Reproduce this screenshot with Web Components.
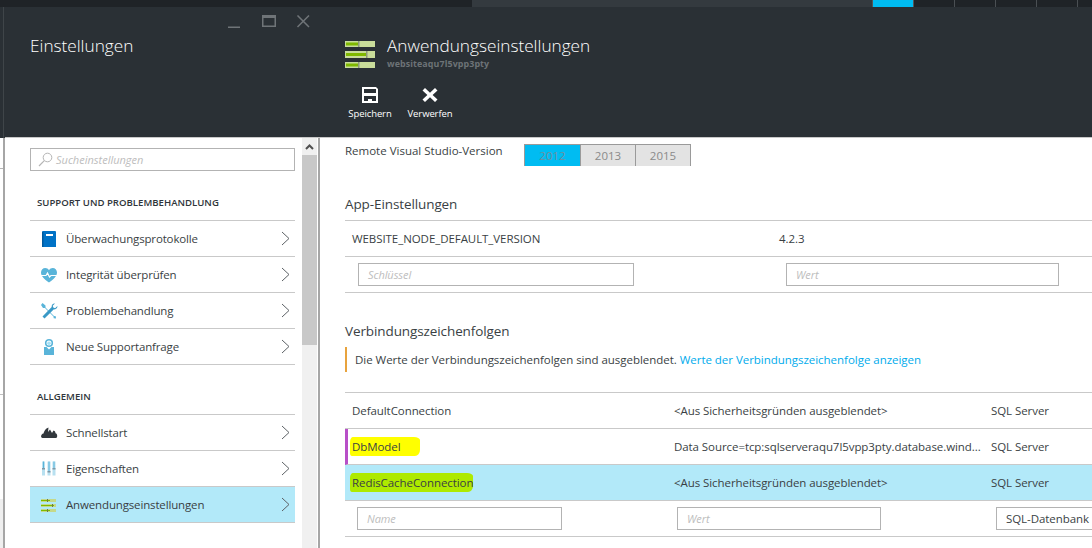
<!DOCTYPE html>
<html lang="de"><head><meta charset="utf-8"><title>Anwendungseinstellungen</title>
<style>
html,body{margin:0;padding:0;height:100%;overflow:hidden;background:#fff;}
body{width:1092px;height:548px;font-family:"Open Sans","Noto Sans",sans-serif;color:#3a3f44;display:flex;flex-direction:column;}
.shell{display:flex;flex:1;min-height:0;}
.ic{display:block;width:22px;height:18px;}
</style></head><body>
<x-topbar></x-topbar>
<div class="shell">
  <x-strip></x-strip>
  <x-blade style="width:315px" heading="Einstellungen" controls>
    <x-scroll-pane>
      <x-field style="width:265px;margin:10px 0 0" search placeholder="Sucheinstellungen"></x-field>
      <x-section style="margin-top:23px">SUPPORT UND PROBLEMBEHANDLUNG</x-section>
      <x-nav-row label="Überwachungsprotokolle"><svg slot="icon" class="ic" viewBox="0 0 22 18"><path fill="#0072c6" d="M4 2a1 1 0 0 1 1-1h12a1 1 0 0 1 1 1v15H5a1 1 0 0 1-1-1z"/><path fill="#005a9e" d="M4 2h1.500v15H4z"/><path fill="#fff" d="M8 4h7v2H8z"/></svg></x-nav-row>
      <x-nav-row label="Integrität überprüfen"><svg slot="icon" class="ic" viewBox="0 0 22 18"><path fill="#59b4d9" d="M11 16.500C6 13 3 10 3 6.500 3 3.800 5 2 7.200 2c1.600 0 3 .8 3.800 2.200C11.800 2.800 13.200 2 14.800 2 17 2 19 3.800 19 6.500 19 10 16 13 11 16.500z"/><path fill="none" stroke="#fff" stroke-width="1.200" d="M3 9.500h5l1.500-2.500 2 4 1.500-1.500h6"/></svg></x-nav-row>
      <x-nav-row label="Problembehandlung"><svg slot="icon" class="ic" viewBox="0 0 22 18"><path fill="#59b4d9" d="M4.500 1l3 2.500v2l8.500 8.500 1.800 .2.200 2.300-2.300-.2-.2-1.800L7 6H5L3 3z"/><path fill="#3999c6" d="M17 1.500l-2.300 2.300.6 1.800 1.800.6L19.400 4c.3 2-1.600 3.800-3.500 3.300L6.500 16.500 4.500 14.500l9.200-9.400C13.300 3 15 1.200 17 1.500z"/></svg></x-nav-row>
      <x-nav-row label="Neue Supportanfrage"><svg slot="icon" class="ic" viewBox="0 0 22 18"><circle cx="11" cy="5" r="3.300" fill="none" stroke="#59b4d9" stroke-width="1.600"/><circle cx="11" cy="5.200" r="1.800" fill="#a5e0f5"/><path fill="#59b4d9" d="M6 9h2.500l2.500 2.500L13.500 9H16v8H6z"/></svg></x-nav-row>
      <x-section style="margin-top:23px">ALLGEMEIN</x-section>
      <x-nav-row label="Schnellstart"><svg slot="icon" class="ic" viewBox="0 0 22 18"><path fill="#32383d" d="M4.500 14C2.500 14 2.500 10 5.500 9.500 6 7.500 7 5.500 8.500 4.500L10.500 3.500 10 8l2-2.500 2 3.500 1.500-2.500c1.500.5 2 1.500 2 2.800 2-.1 2.400 4.700.5 4.700z"/></svg></x-nav-row>
      <x-nav-row label="Eigenschaften"><svg slot="icon" class="ic" viewBox="0 0 22 18"><path fill="#b8e0f0" d="M4 1.500h3v14H4zM9.500 1.500h3v14h-3zM14.500 1.500h3v14h-3z"/><path fill="#59b4d9" d="M5 1.500h1v7H5zM10.500 1.500h1v10h-1zM15.500 1.500h1v7h-1z"/><path fill="#7f98a6" d="M4 8h3v1.500H4zM9.500 11h3v1.500h-3zM14.500 8h3v1.500h-3z"/></svg></x-nav-row>
      <x-nav-row selected label="Anwendungseinstellungen"><svg slot="icon" class="ic" viewBox="0 0 22 18"><path fill="#c5d98a" d="M3 3h15v3H3zM3 8h15v3H3zM3 13h15v3H3z"/><path fill="#7fba00" d="M3 4h9v1H3zM3 9h13v1H3zM3 14h9v1H3z"/><path fill="#6d7a4a" d="M9 3h1v3H9zM14 8h1v3h-1zM9 13h1v3H9z"/></svg></x-nav-row>
    </x-scroll-pane>
  </x-blade>
  <x-blade style="flex:1;min-width:0" heading="Anwendungseinstellungen" subtitle="websiteaqu7l5vpp3pty" main>
    <svg slot="logo" width="30" height="27" viewBox="0 0 30 27"><path fill="#c9dc9a" d="M0 0h30v6H0zM0 10h30v7H0zM0 21h30v6H0z"/><path fill="#7fb800" d="M1 1.500h12v3H1zM1 12h20v3H1zM1 22.500h12v3H1z"/><path fill="#8e9a78" d="M13 0h1.500v6H13zM21 10h1.500v7H21zM13 21h1.500v6H13z"/></svg>
    <x-command slot="commands" label="Speichern"><svg width="18" height="18" viewBox="0 0 18 18"><path fill="#fff" fill-rule="evenodd" d="M1 1h14l2 2v14H1zM3 3v4h12V3zM3 10v5h4v-2h4v2h4v-5z"/></svg></x-command>
    <x-command slot="commands" label="Verwerfen"><svg width="18" height="18" viewBox="0 0 18 18"><path fill="#fff" d="M4 2l5 4.700L14 2l2.500 2.500L11.600 9l4.900 4.500L14 16l-5-4.700L4 16l-2.500-2.500L6.400 9 1.500 4.500z"/></svg></x-command>
    <x-content>
      <x-version-row label="Remote Visual Studio-Version"></x-version-row>
      <x-heading ruled style="margin-top:28px">App-Einstellungen</x-heading>
      <x-table-row cols="427px 1fr"><span>WEBSITE_NODE_DEFAULT_VERSION</span><span>4.2.3</span></x-table-row>
      <x-table-row inputs style="--pad:13px"><x-field style="width:276px;margin-right:152px" placeholder="Schlüssel"></x-field><x-field style="width:273px" placeholder="Wert"></x-field></x-table-row>
      <x-heading style="margin-top:28px">Verbindungszeichenfolgen</x-heading>
      <x-notice>Die Werte der Verbindungszeichenfolgen sind ausgeblendet. <a>Werte der Verbindungszeichenfolge anzeigen</a></x-notice>
      <x-table-row style="margin-top:20px;height:37px;border-top:1px solid #c9c9c9" cols="322px 317px 1fr"><span>DefaultConnection</span><span>&lt;Aus Sicherheitsgründen ausgeblendet&gt;</span><span>SQL Server</span></x-table-row>
      <x-table-row accent cols="322px 317px 1fr"><span><x-mark color="#ffff00" style="--r:19px">DbModel</x-mark></span><span>Data Source=tcp:sqlserveraqu7l5vpp3pty.database.wind...</span><span>SQL Server</span></x-table-row>
      <x-table-row selected cols="322px 317px 1fr"><span><x-mark color="#aeea00" style="--r:0px">RedisCacheConnection</x-mark></span><span>&lt;Aus Sicherheitsgründen ausgeblendet&gt;</span><span>SQL Server</span></x-table-row>
      <x-table-row inputs style="--pad:12px"><x-field style="width:205px;margin-right:115px" placeholder="Name"></x-field><x-field style="width:204px;margin-right:115px" placeholder="Wert"></x-field><x-field style="width:130px" value="SQL-Datenbank"></x-field></x-table-row>
    </x-content>
  </x-blade>
</div>
<script>
function def(name, css, html, init){
  customElements.define(name, class extends HTMLElement{
    connectedCallback(){
      if(this.shadowRoot) return;
      const r=this.attachShadow({mode:'open'});
      r.innerHTML='<style>'+css+'</style>'+(typeof html==='function'?html(this):html);
      if(init) init(this,r);
    }
  });
}
const a=(e,n)=>e.getAttribute(n)||'';
def('x-topbar',`:host{display:flex;flex:none;height:7px;background:#1f2327;overflow:hidden}
 div{flex:none}
 .l{width:472px;background:#1f2327}.m{width:400px;background:#343a3f}.c{width:40px;background:#00bcf2;border-left:1px solid #555;border-right:1px solid #555}
 .t{width:40px;border-right:1px solid #4a4f53}`,
 `<div class="l"></div><div class="m"></div><div class="c"></div><div class="t"></div><div class="t"></div><div class="t"></div><div class="t"></div><div class="t"></div>`);
def('x-strip',`:host{display:flex;flex-direction:column;flex:none;width:5px}
 .h{height:131px;background:linear-gradient(90deg,#2a3035 3px,#3f4549 3px,#3f4549 4px,#2a3035 4px)}
 .b{flex:1;background:linear-gradient(90deg,transparent 3px,#a6a6a6 3px),linear-gradient(180deg,#fff 30px,#b5b5b5 30px,#b5b5b5 31px,#fff 31px,#fff 256px,#c0c0c0 256px,#c0c0c0 257px,#fff 257px,#fff 361px,#efefef 361px)}`,
 `<div class="h"></div><div class="b"></div>`);
def('x-blade',`:host{display:flex;flex-direction:column;flex:none;min-height:0}
 header{flex:none;box-sizing:border-box;height:131px;background:#2a3035;position:relative;border-bottom:1px solid #c8c8c8;color:#fff}
 .side{padding:27px 0 0 25px}
 .main{padding:34px 0 0 25px}
 h1{margin:0;font-weight:300;font-size:17.200px;line-height:24px}
 .top{display:flex;gap:12px}
 .main h1{line-height:18px;margin-top:-4px}
 .sub{font-size:8.900px;font-weight:700;color:#6d7377;line-height:14px;margin-top:2px;letter-spacing:.1px}
 .cmds{display:flex;gap:16px;margin-top:15px;margin-left:3px}
 .ctl{position:absolute;top:8px;left:223px;display:flex}
 .body{flex:1;min-height:0;display:flex;background:#fff}
 .body.edge{border-right:2px solid #a6a6a6}`,
 e=>{
  const main=e.hasAttribute('main');
  return main?`<header class="main"><div class="top"><slot name="logo"></slot><div><h1>${a(e,'heading')}</h1><div class="sub">${a(e,'subtitle')}</div></div></div><div class="cmds"><slot name="commands"></slot></div></header><div class="body"><slot></slot></div>`
  :`<header class="side"><h1>${a(e,'heading')}</h1><svg class="ctl" width="86" height="14" viewBox="0 0 86 14"><path fill="#6f7478" d="M0 11.500h12v1.500H0z"/><path fill="#6f7478" fill-rule="evenodd" d="M34 0h14v12H34zM35.500 3v7.500h11V3z"/><path fill="none" stroke="#6f7478" stroke-width="1.500" d="M69.500.5l11.500 11.500M81 .5L69.500 12"/></svg></header><div class="body edge"><slot></slot></div>`;
 });
def('x-scroll-pane',`:host{display:flex;flex:1;min-width:0}
 .c{flex:1;min-width:0;padding-left:25px;overflow:hidden}
 .bar{flex:none;width:15px;margin-right:1px;background:#f0f0f0;display:flex;flex-direction:column;margin-left:7px}
 .up{height:17px;background:#f0f0f0;display:flex;align-items:center;justify-content:center}
 .th{height:190px;background:#c8c8c8}`,
 `<div class="c"><slot></slot></div><div class="bar"><div class="up"><svg width="9" height="6" viewBox="0 0 9 6"><path fill="none" stroke="#505050" stroke-width="2" d="M1 5l3.500-3.500L8 5"/></svg></div><div class="th"></div></div>`);
def('x-field',`:host{display:block;flex:none;box-sizing:border-box;height:23px;border:1px solid #b3b3b3;background:#fff;font-size:11px;line-height:20px}
 .w{display:flex;align-items:center;height:21px;padding:0 0 0 9px;white-space:nowrap;overflow:hidden}
 .p{font-style:italic;color:#bdbdbd}.v{color:#3a3f44;font-size:11.500px}
 svg{margin:0 3px 0 -2px;flex:none}`,
 e=>`<div class="w">${e.hasAttribute('search')?'<svg width="15" height="15" viewBox="0 0 15 15"><circle cx="9.500" cy="5.500" r="4.300" fill="none" stroke="#b5b5b5"/><path stroke="#b5b5b5" stroke-width="1.200" d="M6.300 8.700L1 14"/></svg>':''}${e.hasAttribute('value')?`<span class="v">${a(e,'value')}</span>`:`<span class="p">${a(e,'placeholder')}</span>`}</div>`);
def('x-section',`:host{display:block;box-sizing:border-box;width:265px;height:27px;padding:0 0 0 7px;font-size:9.600px;font-weight:600;line-height:18px;color:#2f353a;border-bottom:1px solid #c9c9c9}`,`<slot></slot>`);
def('x-nav-row',`:host{display:flex;align-items:center;box-sizing:border-box;width:265px;height:36px;border-bottom:1px solid #c9c9c9;font-size:11.500px;color:#3a3f44}
 :host([selected]){background:#b2e9f9}
 .i{flex:none;width:22px;margin-left:8px;margin-right:6px;display:flex}
 .t{flex:1;white-space:nowrap;letter-spacing:-.15px}
 svg.ch{flex:none;margin-right:5px}`,
 e=>`<div class="i"><slot name="icon"></slot></div><div class="t">${a(e,'label')}</div><svg class="ch" width="9" height="15" viewBox="0 0 9 15"><path fill="none" stroke="#5d6266" stroke-width="1" d="M1 1l7 6.500L1 14"/></svg>`);
def('x-command',`:host{display:flex;flex-direction:column;align-items:center;font-size:9.500px;line-height:13px;color:#fff;width:44px;letter-spacing:-.1px}
 .i{height:19px;margin-bottom:2px}`,
 e=>`<div class="i"><slot></slot></div><div>${a(e,'label')}</div>`);
def('x-content',`:host{display:block;flex:1;min-width:0;padding-left:25px;overflow:hidden}`,`<slot></slot>`);
def('x-version-row',`:host{display:flex;align-items:flex-start;padding-top:6px;font-size:11.500px}
 .l{width:179px;line-height:14px;white-space:nowrap}
 .tabs{display:flex;height:22px;box-sizing:border-box;border:1px solid #9a9a9a;border-bottom:0}
 .tabs div{width:54px;text-align:center;line-height:21px;background:#e3e3e3;color:#8a8a8a;font-size:11.500px;border-left:1px solid #9a9a9a}
 .tabs div:first-child{width:55px;background:#00bcf2;border-left:0;color:#6f8fa0}`,
 e=>`<div class="l">${a(e,'label')}</div><div class="tabs"><div>2012</div><div>2013</div><div>2015</div></div>`);
def('x-heading',`:host{display:block;font-size:13.500px;line-height:20px;height:21px;color:#3a3f44;letter-spacing:-.1px;box-sizing:border-box}
 :host([ruled]){height:27px;border-bottom:1px solid #c9c9c9}`,`<slot></slot>`);
def('x-table-row',`:host{display:grid;box-sizing:border-box;height:36px;border-bottom:1px solid #c9c9c9;align-items:center;font-size:11.500px;padding-left:7px;white-space:nowrap;letter-spacing:-.07px;position:relative}
 :host([inputs]){display:flex;padding-left:var(--pad,12px)}
 :host([accent]){border-left:3px solid #b84fc8;padding-left:4px}
 :host([selected]){background:#b2e9f9}`,
 `<slot></slot>`,
 (e)=>{ if(e.hasAttribute('cols')) e.style.gridTemplateColumns=a(e,'cols'); });
def('x-mark',`:host{display:inline-block;background:var(--c);padding:2px var(--r,2px) 2px 2px;margin:-2px calc(0px - var(--r,2px)) -2px -2px;border-radius:3px 6px 5px 2px/5px 3px 6px 3px}`,`<slot></slot>`,
 e=>e.style.setProperty('--c',a(e,'color')));
def('x-notice',`:host{display:block;border-left:2px solid #e8a33d;margin-top:5px;padding:0 0 0 8px;height:25px;line-height:25px;font-size:11.500px;white-space:nowrap;letter-spacing:-.03px}
 ::slotted(a){color:#00abec}`,`<slot></slot>`);
</script>
</body></html>
